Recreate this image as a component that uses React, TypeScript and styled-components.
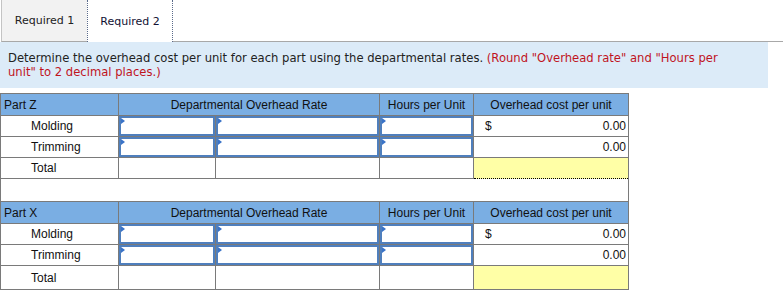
import React from "react";
import styled, { createGlobalStyle, css } from "styled-components";

const Global = createGlobalStyle`
  body { margin: 0; background: #fff; }
`;

const Page = styled.div`
  width: 783px;
  height: 295px;
  overflow: hidden;
`;

const TabBar = styled.div`
  display: flex;
  height: 42px;
  box-sizing: border-box;
`;

const Tab = styled.div<{ $active?: boolean }>`
  box-sizing: border-box;
  height: 42px;
  display: flex;
  align-items: center;
  justify-content: center;
  font-family: "DejaVu Sans", Verdana, sans-serif;
  font-size: 11px;
  color: #222;
  ${(p) =>
    p.$active
      ? css`
          width: 86px;
          background: #fff;
          border-left: 1px dotted #5a6a8a;
          border-right: 1px dotted #5a6a8a;
          color: #111133;
        `
      : css`
          width: 86px;
          margin-left: 1px;
          background: #f2f2f2;
          border-left: 1px solid #c4c4c4;
          border-bottom: 1px solid #a8a8a8;
        `}
`;

const TabFill = styled.div`
  flex: 1;
  border-bottom: 1px solid #a8a8a8;
`;

const Instructions = styled.div`
  width: 768px;
  box-sizing: border-box;
  background: #dcebf8;
  padding: 9px 40px 6px 8px;
  font-family: "DejaVu Sans", Verdana, sans-serif;
  font-size: 11.6px;
  line-height: 14px;
  color: #222;
  height: 46px;
`;

const Red = styled.span`
  color: #c0141e;
`;

const Table = styled.table`
  margin-top: 5px;
  border-collapse: collapse;
  table-layout: fixed;
  width: 628px;
  font-family: "Liberation Sans", Arial, sans-serif;
  font-size: 12px;
  color: #111;
`;

const HeadCell = styled.td<{ $left?: boolean }>`
  background: #7aaee3;
  border: 1px solid #7a7a7a;
  height: 21px;
  padding: 0 3px;
  text-align: ${(p) => (p.$left ? "left" : "center")};
  white-space: nowrap;
`;

const LabelCell = styled.td<{ $tall?: boolean }>`
  border: 1px solid #7a7a7a;
  height: ${(p) => (p.$tall ? 23 : 20)}px;
  padding: 0 0 0 30px;
  white-space: nowrap;
`;

const Cell = styled.td`
  border: 1px solid #7a7a7a;
  height: 20px;
  padding: 0;
`;

const InputCell = styled.td`
  border: 1px solid #7a7a7a;
  height: 20px;
  padding: 0;
`;

const InputBox = styled.div`
  box-sizing: border-box;
  height: 20px;
  border: 2px solid #4f7fbd;
  position: relative;
  &::before {
    content: "";
    position: absolute;
    left: 0;
    top: 0;
    width: 0;
    height: 0;
    border-top: 3px solid transparent;
    border-bottom: 3px solid transparent;
    border-left: 4px solid #3a73c8;
  }
`;

const ValueCell = styled.td`
  border: 1px solid #7a7a7a;
  height: 20px;
  padding: 0 2px 0 11px;
`;

const ValueRow = styled.div`
  display: flex;
  justify-content: space-between;
`;

const TotalCell = styled.td<{ $dotted?: boolean; $solidTop?: boolean }>`
  border: 1px solid #7a7a7a;
  background: #ffffa6;
  height: 20px;
  padding: 0;
  ${(p) => p.$dotted && css`border-bottom: 1px dotted #000;`}
  ${(p) => p.$solidTop && css`border-top: 1px solid #000;`}
`;

const SpacerCell = styled.td`
  border-left: 1px solid #7a7a7a;
  border-right: 1px solid #7a7a7a;
  height: 22px;
  padding: 0;
`;

const Col = styled.col<{ $w: number }>`
  width: ${(p) => p.$w}px;
`;

function Header({ name }: { name: string }) {
  return (
    <tr>
      <HeadCell $left>{name}</HeadCell>
      <HeadCell colSpan={2}>Departmental Overhead Rate</HeadCell>
      <HeadCell>Hours per Unit</HeadCell>
      <HeadCell>Overhead cost per unit</HeadCell>
    </tr>
  );
}

function InputRow({ label, dollar }: { label: string; dollar?: boolean }) {
  return (
    <tr>
      <LabelCell>{label}</LabelCell>
      <InputCell><InputBox /></InputCell>
      <InputCell><InputBox /></InputCell>
      <InputCell><InputBox /></InputCell>
      <ValueCell>
        <ValueRow>
          <span>{dollar ? "$" : ""}</span>
          <span>0.00</span>
        </ValueRow>
      </ValueCell>
    </tr>
  );
}

function Section({ name, last }: { name: string; last?: boolean }) {
  return (
    <>
      <Header name={name} />
      <InputRow label="Molding" dollar />
      <InputRow label="Trimming" />
      <tr>
        <LabelCell $tall={last}>Total</LabelCell>
        <Cell />
        <Cell />
        <Cell />
        {last ? <TotalCell $solidTop /> : <TotalCell $dotted />}
      </tr>
    </>
  );
}

export default function App() {
  return (
    <Page>
      <Global />
      <TabBar>
        <Tab>Required 1</Tab>
        <Tab $active>Required 2</Tab>
        <TabFill />
      </TabBar>
      <Instructions>
        Determine the overhead cost per unit for each part using the departmental rates.{" "}
        <Red>(Round "Overhead rate" and "Hours per unit" to 2 decimal places.)</Red>
      </Instructions>
      <Table>
        <colgroup>
          <Col $w={118} />
          <Col $w={97} />
          <Col $w={164} />
          <Col $w={94} />
          <Col $w={155} />
        </colgroup>
        <tbody>
          <Section name="Part Z" />
          <tr>
            <SpacerCell colSpan={5} />
          </tr>
          <Section name="Part X" last />
        </tbody>
      </Table>
    </Page>
  );
}
